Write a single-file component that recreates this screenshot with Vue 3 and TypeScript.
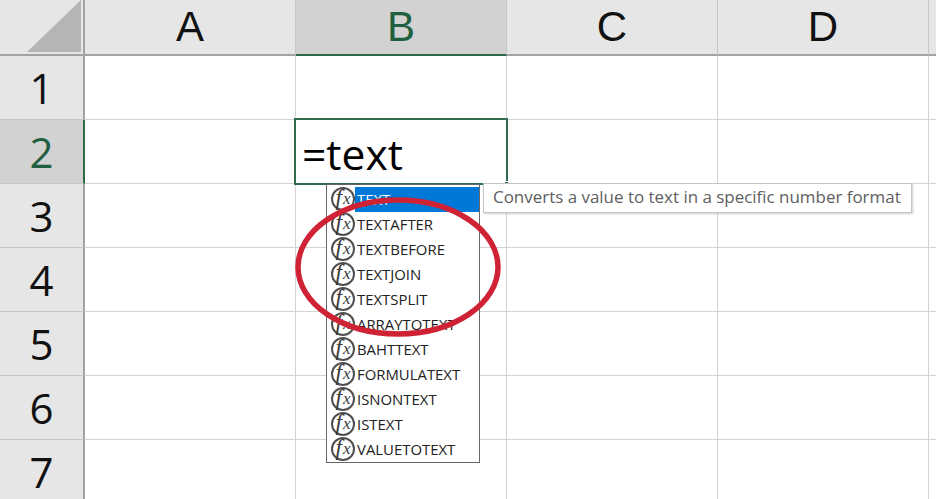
<script setup lang="ts">
const cols: string[] = ['A', 'B', 'C', 'D']
const rows: number[] = [1, 2, 3, 4, 5, 6, 7]
const fns: string[] = ['TEXT', 'TEXTAFTER', 'TEXTBEFORE', 'TEXTJOIN', 'TEXTSPLIT', 'ARRAYTOTEXT', 'BAHTTEXT', 'FORMULATEXT', 'ISNONTEXT', 'ISTEXT', 'VALUETOTEXT']
</script>

<template>
  <div class="sheet">
    <div class="grid">
      <div class="corner">
        <svg width="85" height="55" viewBox="0 0 85 55"><polygon points="27,52 81,52 81,0" fill="#b5b5b5" /></svg>
      </div>
      <div v-for="c in cols" :key="c" class="colh" :class="{ sel: c === 'B' }">{{ c }}</div>
      <div class="colh tail"></div>
      <template v-for="r in rows" :key="r">
        <div class="rowh" :class="{ sel: r === 2 }">{{ r }}</div>
        <div v-for="c in cols" :key="c" class="cell"></div>
        <div class="cell tail"></div>
      </template>
    </div>

    <div class="active">=text<span class="handle"></span></div>

    <ul class="popup">
      <li v-for="(f, i) in fns" :key="f" class="item" :class="{ hi: i === 0 }">
        <span class="fx"><span class="fx-f">f</span><span class="fx-x">x</span></span>
        <span class="name">{{ f }}</span>
      </li>
    </ul>

    <div class="tip">Converts a value to text in a specific number format</div>

    <svg class="ring" width="220" height="160" viewBox="0 0 220 160">
      <ellipse cx="110" cy="79" rx="100" ry="67" fill="none" stroke="#cf2234" stroke-width="5.5" />
    </svg>
  </div>
</template>

<style scoped>
.sheet {
  position: relative;
  width: 936px;
  height: 499px;
  overflow: hidden;
  background: #fff;
  font-family: "Open Sans", "Noto Sans", sans-serif;
  color: #111;
}
.grid {
  display: grid;
  grid-template-columns: 85px repeat(4, 211px) 7px;
  grid-template-rows: 56px repeat(7, 64px);
}
.corner {
  background: #e6e6e6;
  border-right: 2px solid #a3a3a3;
  border-bottom: 2px solid #a3a3a3;
  box-sizing: border-box;
  overflow: hidden;
}
.corner svg { display: block; }
.colh {
  background: #e6e6e6;
  border-right: 1px solid #c6c6c6;
  border-bottom: 2px solid #a3a3a3;
  box-sizing: border-box;
  font-family: "Liberation Sans", Arial, sans-serif;
  font-size: 42px;
  line-height: 54px;
  text-align: center;
}
.colh.sel {
  background: #d2d2d2;
  color: #1f6040;
  border-bottom-color: #2b6a4a;
}
.colh.tail { border-right: 0; }
.rowh {
  background: #e6e6e6;
  border-right: 2px solid #a3a3a3;
  border-bottom: 1px solid #c6c6c6;
  box-sizing: border-box;
  font-size: 42px;
  line-height: 63px;
  text-align: center;
}
.rowh.sel {
  background: #d2d2d2;
  color: #1f6040;
  border-right-color: #2b6a4a;
}
.cell {
  border-right: 1px solid #d4d4d4;
  border-bottom: 1px solid #d4d4d4;
  box-sizing: border-box;
}
.cell.tail { border-right: 0; }
.active {
  position: absolute;
  left: 294px;
  top: 118px;
  width: 214px;
  height: 67px;
  box-sizing: border-box;
  border: 2px solid #2f6b4c;
  background: #fff;
  padding-left: 6px;
  font-size: 42.6px;
  line-height: 66px;
  color: #000;
}
.handle {
  position: absolute;
  right: -3px;
  bottom: -3px;
  width: 5px;
  height: 5px;
  background: #2f6b4c;
  border: 1px solid #fff;
  box-sizing: border-box;
}
.popup {
  position: absolute;
  left: 326px;
  top: 184px;
  width: 154px;
  height: 279px;
  box-sizing: border-box;
  margin: 0;
  padding: 2px 0 0;
  list-style: none;
  background: #fff;
  border: 1px solid #666;
}
.item {
  display: flex;
  align-items: center;
  box-sizing: border-box;
  height: 25px;
  padding-bottom: 2px;
  font-size: 14.9px;
  color: #222;
}
.item.hi {
  background: linear-gradient(to right, #fff 28px, #0078d7 28px);
}
.item.hi .name { color: #fff; }
.fx {
  flex: none;
  display: flex;
  justify-content: center;
  align-items: center;
  width: 24px;
  height: 24px;
  margin-left: 4px;
  box-sizing: border-box;
  border: 2px solid #505050;
  border-radius: 50%;
  font-family: "Liberation Serif", serif;
  font-style: italic;
  color: #3a3a3a;
  background: #fff;
}
.fx-f {
  font-size: 23px;
  line-height: 20px;
  margin-top: -2px;
}
.fx-x {
  font-size: 17px;
  line-height: 20px;
  margin-top: 1px;
  margin-left: 1px;
}
.name {
  margin-left: 2px;
  white-space: nowrap;
}
.tip {
  position: absolute;
  left: 483px;
  top: 183px;
  width: 429px;
  height: 30px;
  box-sizing: border-box;
  padding-left: 9px;
  background: #fff;
  border: 1px solid #c4c4c4;
  box-shadow: 1px 1px 2px rgba(0, 0, 0, 0.2);
  font-size: 16.95px;
  line-height: 26px;
  color: #5e5e5e;
  white-space: nowrap;
}
.ring {
  position: absolute;
  left: 288px;
  top: 188px;
  pointer-events: none;
}
</style>
